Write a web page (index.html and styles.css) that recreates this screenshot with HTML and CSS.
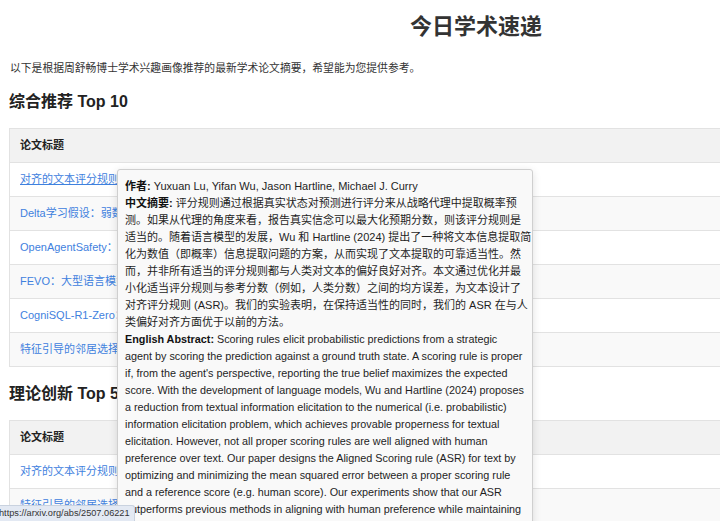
FILE: index.html
```html
<!DOCTYPE html>
<html lang="zh-CN">
<head>
<meta charset="utf-8">
<title>今日学术速递</title>
<link rel="stylesheet" href="styles.css">
</head>
<body>
<div class="page">
  <h1 class="title">今日学术速递</h1>
  <p class="intro">以下是根据周舒畅博士学术兴趣画像推荐的最新学术论文摘要，希望能为您提供参考。</p>

  <h2 class="section">综合推荐 Top 10</h2>
  <table class="papers">
    <thead><tr><th>论文标题</th></tr></thead>
    <tbody>
      <tr><td><a class="hovered" href="https://arxiv.org/abs/2507.06221">对齐的文本评分规则</a></td></tr>
      <tr><td><a href="#">Delta学习假设：弱数据上的偏好调优可带来强劲提升</a></td></tr>
      <tr><td><a href="#">OpenAgentSafety：评估真实世界AI智能体安全性的综合框架</a></td></tr>
      <tr><td><a href="#">FEVO：大型语言模型的金融知识扩展与推理演化</a></td></tr>
      <tr><td><a href="#">CogniSQL-R1-Zero：用于高效SQL生成的轻量强化推理</a></td></tr>
      <tr><td><a href="#">特征引导的邻居选择用于非专家评估模型预测</a></td></tr>
    </tbody>
  </table>

  <h2 class="section">理论创新 Top 5</h2>
  <table class="papers">
    <thead><tr><th>论文标题</th></tr></thead>
    <tbody>
      <tr><td><a href="#">对齐的文本评分规则</a></td></tr>
      <tr><td><a href="#">特征引导的邻居选择用于非专家评估模型预测</a></td></tr>
    </tbody>
  </table>

  <div class="tooltip">
    <div class="tip-line"><b>作者:</b> Yuxuan Lu, Yifan Wu, Jason Hartline, Michael J. Curry</div>
    <div class="tip-block"><b>中文摘要:</b> 评分规则通过根据真实状态对预测进行评分来从战略代理中提取概率预<br>测。如果从代理的角度来看，报告真实信念可以最大化预期分数，则该评分规则是<br>适当的。随着语言模型的发展，Wu 和 Hartline (2024) 提出了一种将文本信息提取简<br>化为数值（即概率）信息提取问题的方案，从而实现了文本提取的可靠适当性。然<br>而，并非所有适当的评分规则都与人类对文本的偏好良好对齐。本文通过优化并最<br>小化适当评分规则与参考分数（例如，人类分数）之间的均方误差，为文本设计了<br>对齐评分规则 (ASR)。我们的实验表明，在保持适当性的同时，我们的 ASR 在与人<br>类偏好对齐方面优于以前的方法。</div>
    <div class="tip-block tip-en"><b>English Abstract:</b> Scoring rules elicit probabilistic predictions from a strategic<br>agent by scoring the prediction against a ground truth state. A scoring rule is proper<br>if, from the agent's perspective, reporting the true belief maximizes the expected<br>score. With the development of language models, Wu and Hartline (2024) proposes<br>a reduction from textual information elicitation to the numerical (i.e. probabilistic)<br>information elicitation problem, which achieves provable properness for textual<br>elicitation. However, not all proper scoring rules are well aligned with human<br>preference over text. Our paper designs the Aligned Scoring rule (ASR) for text by<br>optimizing and minimizing the mean squared error between a proper scoring rule<br>and a reference score (e.g. human score). Our experiments show that our ASR<br>outperforms previous methods in aligning with human preference while maintaining<br>properness.</div>
  </div>
</div>
<div class="statusbar">https://arxiv.org/abs/2507.06221</div>
</body>
</html>
```
FILE: styles.css
```css
html, body {
  margin: 0;
  padding: 0;
  background: #ffffff;
  overflow: hidden;
}
body {
  font-family: "Liberation Sans", Arial, "Noto Sans CJK SC", sans-serif;
  color: #333333;
}
.page {
  position: relative;
  width: 930px;
  padding: 12px 0 0 9px;
}
.title {
  margin: 0;
  font-size: 22px;
  line-height: 30px;
  font-weight: bold;
  text-align: center;
  color: #333333;
  padding-left: 4px;
}
.intro {
  margin: 18px 0 0 1px;
  font-size: 10.8px;
  line-height: 16px;
}
.section {
  margin: 14px 0 14px 0;
  font-size: 16px;
  line-height: 24px;
  font-weight: bold;
  color: #222222;
}
.papers {
  width: 100%;
  border-collapse: collapse;
  border: 1px solid #e2e2e2;
  font-size: 11px;
}
.papers th, .papers td {
  text-align: left;
  padding: 10px 10px;
  line-height: 13px;
  border-bottom: 1px solid #e2e2e2;
}
.papers th {
  background: #f2f2f2;
  font-size: 11px;
  font-weight: bold;
  color: #222222;
}
.papers tbody tr:nth-child(even) td {
  background: #f9f9f9;
}
.papers a {
  color: #3f81de;
  text-decoration: none;
}
.papers a.hovered {
  text-decoration: underline;
}
.papers + .section {
  margin-top: 15px;
}
.tooltip {
  position: absolute;
  left: 117px;
  top: 169px;
  width: 400px;
  padding: 8px 7px;
  background: #f9f9f9;
  border: 1px solid #cfcfcf;
  border-radius: 3px;
  box-shadow: 0 2px 8px rgba(0, 0, 0, 0.12);
  font-size: 11px;
  line-height: 17px;
  color: #1e1e1e;
  white-space: nowrap;
}
.tip-en {
  font-size: 10.8px;
}
.tooltip b {
  font-weight: bold;
  color: #111111;
}
.statusbar {
  position: fixed;
  left: -5px;
  bottom: 0;
  height: 15px;
  padding: 0 4px 0 3px;
  background: #e3e9f3;
  border: 1px solid #c9d2df;
  border-bottom: none;
  border-radius: 0 3px 0 0;
  font-size: 9.2px;
  line-height: 15px;
  color: #333333;
}
```
